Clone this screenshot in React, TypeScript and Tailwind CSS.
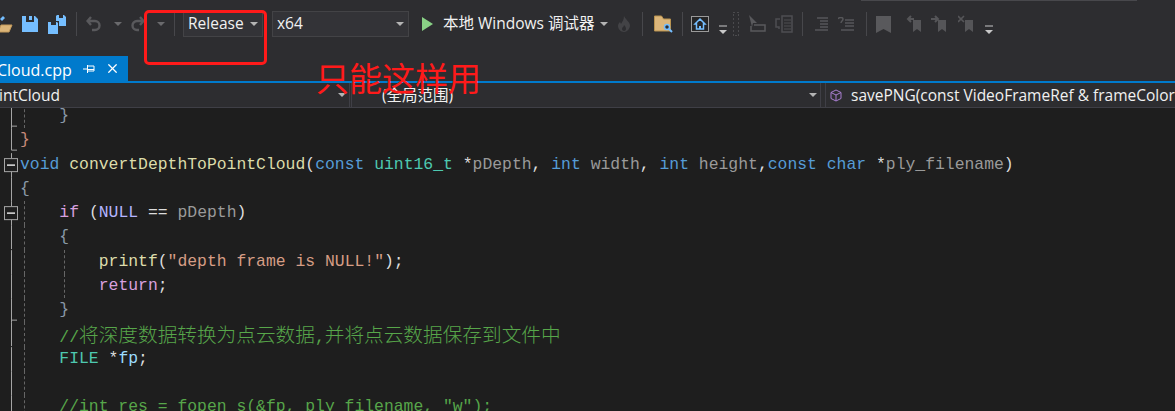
import React from "react";
import { X } from "lucide-react";

const UI = "font-['Open_Sans','Noto_Sans_CJK_SC',sans-serif]";

const Caret = ({ className = "" }: { className?: string }) => (
  <svg width="8" height="4" viewBox="0 0 8 4" className={`shrink-0 ${className}`}>
    <path d="M0 0h8L4 4z" fill="currentColor" />
  </svg>
);

const Sep = ({ className = "" }: { className?: string }) => (
  <div className={`w-px h-[24px] bg-[#47474b] shrink-0 ${className}`} />
);

const Overflow = ({ className = "" }: { className?: string }) => (
  <svg width="10" height="10" viewBox="0 0 10 10" className={`shrink-0 ${className}`}>
    <path d="M1 1h8" stroke="#c8c8c8" strokeWidth="1" />
    <path d="M1 5h8L5 9z" fill="#c8c8c8" />
  </svg>
);

const Bookmark = ({ kind, className = "" }: { kind: "back" | "next" | "clear"; className?: string }) => (
  <svg width="15" height="18" viewBox="0 0 15 18" className={`shrink-0 ${className}`}>
    <path d="M7 5h8v12l-4-3-4 3z" fill="#555558" />
    {kind === "back" && <path d="M8 4H2M5 1 2 4l3 3" stroke="#555558" strokeWidth="2" fill="none" />}
    {kind === "next" && <path d="M0 4h7M4 1l3 3-3 3" stroke="#555558" strokeWidth="2" fill="none" />}
    {kind === "clear" && <path d="M0 1l6 6M6 1 0 7" stroke="#555558" strokeWidth="1.600" fill="none" />}
  </svg>
);

const Toolbar = () => (
  <div className={`flex items-center h-[26px] mt-[10px] mb-[19px] ${UI} text-[15.500px] text-[#f1f1f1]`}>
    {/* open */}
    <svg width="17" height="18" viewBox="0 0 17 18" className="shrink-0 -ml-[4px]">
      <path d="M1 8v9h12l3-7H5l-2 5" fill="#dcb67a" stroke="#c49a5a" />
      <path d="M4 4l3-3 2 2-3 3z" fill="#75beff" />
    </svg>
    {/* save */}
    <svg width="16" height="16" viewBox="0 0 16 16" className="shrink-0 ml-[9px]">
      <path d="M0 0h4v6h8V0h1l3 3v13H0z" fill="#75beff" />
      <path d="M7 0h3v4H7z" fill="#75beff" />
    </svg>
    {/* save all */}
    <svg width="18" height="19" viewBox="0 0 18 19" className="shrink-0 ml-[10px]">
      <path d="M0 7h3v3h5V7h1l1 1v11H0z" fill="#75beff" />
      <path d="M9 0h2v3h4V0h1l2 2v9h-7V6H8V1z" fill="#75beff" />
    </svg>
    <Sep className="ml-[10px]" />
    {/* undo */}
    <svg width="15" height="16" viewBox="0 0 15 16" className="shrink-0 ml-[9px]">
      <path d="M5 1 1.500 5 5 9M2 5h7a4.500 4.500 0 0 1 0 9H6" stroke="#59595c" strokeWidth="2.400" fill="none" />
    </svg>
    <Caret className="ml-[13px] text-[#6a6a6d]" />
    {/* redo */}
    <svg width="14" height="16" viewBox="0 0 14 16" className="shrink-0 ml-[9px]">
      <path d="M9 1l3.500 4L9 9M12 5H6a4.500 4.500 0 0 0 0 9h2" stroke="#59595c" strokeWidth="2.400" fill="none" />
    </svg>
    <Caret className="ml-[12px] text-[#6a6a6d]" />
    <Sep className="ml-[9px]" />
    {/* config combo */}
    <div className="flex items-center justify-between w-[80px] h-[26px] ml-[8px] pl-[4px] pr-[4px] bg-[#333337] border border-[#434346]">
      <span className="pb-[1px]">Release</span>
      <Caret className="text-[#b4b4b4]" />
    </div>
    <div className="flex items-center justify-between w-[137px] h-[26px] ml-[9px] pl-[4px] pr-[4px] bg-[#333337] border border-[#434346]">
      <span className="pb-[1px]">x64</span>
      <Caret className="text-[#b4b4b4]" />
    </div>
    {/* start */}
    <svg width="11" height="14" viewBox="0 0 11 14" className="shrink-0 ml-[13px]">
      <path d="M0 0l11 7-11 7z" fill="#89d185" />
    </svg>
    <span className="ml-[10px] pb-[1px] whitespace-nowrap">本地 Windows 调试器</span>
    <Caret className="ml-[5px] text-[#b4b4b4]" />
    {/* hot reload, disabled */}
    <svg width="12" height="16" viewBox="0 0 12 16" className="shrink-0 ml-[10px]">
      <path d="M6 0c1 3 5 5 6 9 0 4-3 7-6 7s-6-3-6-6c0-2 1-3 2-4l1 2c1-2 3-4 3-8z" fill="#434346" />
      <path d="M6 9c1 1 2 2 2 4 0 1-1 2-2 2s-2-1-2-2c0-2 2-2 2-4z" fill="#2d2d30" />
    </svg>
    <Sep className="ml-[12px]" />
    {/* find in files */}
    <svg width="19" height="18" viewBox="0 0 19 18" className="shrink-0 ml-[11px]">
      <path d="M.5 1h7l2 3h7v12H.5z" fill="#dcb67a" stroke="#b8924f" />
      <circle cx="13" cy="12" r="2.500" fill="#2d2d30" stroke="#75beff" strokeWidth="1.500" />
      <path d="M15 14l3 3" stroke="#75beff" strokeWidth="2" />
    </svg>
    <Sep className="ml-[9px]" />
    {/* home */}
    <svg width="18" height="16" viewBox="0 0 18 16" className="shrink-0 ml-[8px]">
      <rect x="0.500" y="0.500" width="17" height="15" fill="#252526" stroke="#9a9a9a" />
      <path d="M9 3l5 5h-1.500v5h-7V8H4z" fill="none" stroke="#75beff" strokeWidth="1.500" />
      <path d="M8 10h2v3H8z" fill="#75beff" />
    </svg>
    <Overflow className="ml-[9px] mt-[11px]" />
    <svg width="6" height="24" viewBox="0 0 6 24" className="shrink-0 ml-[5px]">
      <path d="M0 0h6v24H0z" fill="none" stroke="#4a4a4d" strokeWidth="2" strokeDasharray="2 2" />
    </svg>
    {/* insert comment style pair, disabled */}
    <svg width="17" height="18" viewBox="0 0 17 18" className="shrink-0 ml-[10px]">
      <path d="M0 0l8 8H4l-1 4z" fill="#59595c" />
      <path d="M5 10h11v6H2v-5" fill="none" stroke="#59595c" strokeWidth="1.500" />
    </svg>
    <svg width="18" height="18" viewBox="0 0 18 18" className="shrink-0 ml-[9px]">
      <path d="M5 4H1v8h3v2" fill="none" stroke="#4e4e51" strokeWidth="1.500" />
      <path d="M7 1h10v16H7z" fill="none" stroke="#4e4e51" strokeWidth="1.500" />
      <path d="M9 5h7M9 8h7M9 11h7M9 14h7" stroke="#4e4e51" />
    </svg>
    <Sep className="ml-[9px]" />
    {/* comment / uncomment */}
    <svg width="14" height="14" viewBox="0 0 14 14" className="shrink-0 ml-[11px]">
      <path d="M3 1h11M6 4h8M6 7h8M6 10h8M1 13h13" stroke="#565659" strokeWidth="1.300" />
    </svg>
    <svg width="16" height="14" viewBox="0 0 16 14" className="shrink-0 ml-[10px]">
      <path d="M0 2c1-2 5-2 5 0 0 2-2 2-2 4" fill="none" stroke="#565659" strokeWidth="1.500" />
      <path d="M7 3h9M7 6h9M7 9h9M3 13h13" stroke="#565659" strokeWidth="1.300" />
    </svg>
    <Sep className="ml-[12px]" />
    <svg width="15" height="17" viewBox="0 0 15 17" className="shrink-0 ml-[9px]">
      <path d="M0 0h15v17l-7.500-4L0 17z" fill="#59595c" />
    </svg>
    <Bookmark kind="back" className="ml-[15px]" />
    <Bookmark kind="next" className="ml-[10px]" />
    <Bookmark kind="clear" className="ml-[12px]" />
    <Overflow className="ml-[11px] mt-[11px]" />
  </div>
);

const NavCombo = ({ className, children }: { className: string; children: React.ReactNode }) => (
  <div className={`flex items-center justify-between h-[24px] pr-[3px] border-r border-[#3f3f46] shrink-0 ${className}`}>
    {children}
    <Caret className="text-[#b4b4b4]" />
  </div>
);

type Fold = "none" | "line" | "end" | "minus" | "inner";

const Gutter = ({ fold }: { fold: Fold }) => (
  <svg width="20" height="24.250" viewBox="0 0 20 24" className="shrink-0">
    {fold === "line" && <path d="M11.500 0v24" stroke="#a5a5a5" />}
    {fold === "end" && <path d="M11.500 0v22H17" stroke="#a5a5a5" fill="none" />}
    {fold === "inner" && <path d="M11.500 0v24M11.500 22H17" stroke="#a5a5a5" fill="none" />}
    {fold === "minus" && (
      <>
        <path d="M11.500 0v5M11.500 18v6" stroke="#a5a5a5" />
        <rect x="4.500" y="5.500" width="13" height="13" fill="#1e1e1e" stroke="#a5a5a5" />
        <path d="M7 12h8" stroke="#e0e0e0" strokeWidth="1.500" />
      </>
    )}
  </svg>
);

const Guide = ({ x }: { x: number }) => (
  <span className="absolute top-0 bottom-0 w-px border-l border-dashed border-[#666666]" style={{ left: x }} />
);

const Line = ({ fold = "line", guides = [], children }: { fold?: Fold; guides?: number[]; children?: React.ReactNode }) => (
  <div className="relative flex h-[24.250px] leading-[24.250px] whitespace-pre">
    {guides.map((g) => (
      <Guide key={g} x={g} />
    ))}
    <Gutter fold={fold} />
    <span>{children}</span>
  </div>
);

const Kw = ({ children }: { children: React.ReactNode }) => <span className="text-[#569cd6]">{children}</span>;
const Ty = ({ children }: { children: React.ReactNode }) => <span className="text-[#4ec9b0]">{children}</span>;
const Fn = ({ children }: { children: React.ReactNode }) => <span className="text-[#dcdcaa]">{children}</span>;
const Pa = ({ children }: { children: React.ReactNode }) => <span className="text-[#9a9a9a]">{children}</span>;
const Ctl = ({ children }: { children: React.ReactNode }) => <span className="text-[#d8a0df]">{children}</span>;
const Br = ({ children }: { children: React.ReactNode }) => <span className="text-[#8a9aa8]">{children}</span>;
const Cm = ({ children }: { children: React.ReactNode }) => <span className="text-[#57a64a]">{children}</span>;
const Zh = ({ children }: { children: React.ReactNode }) => (
  <span className="text-[19.670px] font-['Noto_Sans_CJK_SC',sans-serif] font-light">{children}</span>
);

const Editor = () => (
  <div className="flex-1 bg-[#1e1e1e] overflow-hidden font-['Liberation_Mono',monospace] text-[16.400px] text-[#dcdcdc] pt-[2px]">
    <div className="-mt-[6px]">
      <Line fold="inner" guides={[24]}><Br>{"    }"}</Br></Line>
      <Line fold="end"><span className="text-[#c98a7a]">{"}"}</span></Line>
      <Line fold="minus"><Kw>void</Kw> <Fn>convertDepthToPointCloud</Fn>(<Kw>const</Kw> <Ty>uint16_t</Ty> *<Pa>pDepth</Pa>, <Kw>int</Kw> <Pa>width</Pa>, <Kw>int</Kw> <Pa>height</Pa>,<Kw>const</Kw> <Kw>char</Kw> *<Pa>ply_filename</Pa>)</Line>
      <Line><Br>{"{"}</Br></Line>
      <Line fold="minus" guides={[24]}>{"    "}<Ctl>if</Ctl> (<span className="text-[#b4b4ff]">NULL</span> == <Pa>pDepth</Pa>)</Line>
      <Line guides={[24]}><Br>{"    {"}</Br></Line>
      <Line guides={[24, 64]}>{"        "}<Fn>printf</Fn>(<span className="text-[#d69d85]">"depth frame is NULL!"</span>);</Line>
      <Line guides={[24, 64]}>{"        "}<Ctl>return</Ctl>;</Line>
      <Line fold="inner" guides={[24]}><Br>{"    }"}</Br></Line>
      <Line guides={[24]}><Cm>{"    //"}<Zh>将深度数据转换为点云数据</Zh>,<Zh>并将点云数据保存到文件中</Zh></Cm></Line>
      <Line guides={[24]}>{"    "}<Ty>FILE</Ty> *<span className="text-[#9cdcfe]">fp</span>;</Line>
      <Line guides={[24]} />
      <Line guides={[24]}><Cm>{'    //int res = fopen_s(&fp, ply_filename, "w");'}</Cm></Line>
    </div>
  </div>
);

export default function App() {
  return (
    <div className="relative w-[1175px] h-[411px] overflow-hidden bg-[#2d2d30] flex flex-col">
      <div className="h-px w-[276px] ml-[861px] bg-[#48484c] shrink-0" />
      <Toolbar />

      {/* document tab */}
      <div className={`flex items-center w-[128px] h-[25px] bg-[#007acc] text-white text-[16px] shrink-0 ${UI}`}>
        <span className="-ml-[3px] pt-[2px]">Cloud.cpp</span>
        <svg width="12" height="8" viewBox="0 0 12 8" className="shrink-0 ml-[11px]">
          <path d="M0 4h4M4.500 0v8M4.500 1h6.500v5H4.500M4.500 4.500h6.500" stroke="#ffffff" fill="none" />
        </svg>
        <X size={15} strokeWidth={2} className="ml-[10px]" />
      </div>
      <div className="h-[2px] bg-[#007acc] shrink-0" />

      {/* navigation bar */}
      <div className={`flex items-center h-[25px] border-b border-[#3f3f46] text-[15.500px] text-[#f1f1f1] shrink-0 ${UI}`}>
        <NavCombo className="w-[350px]">
          <span className="-ml-[1px] pt-[2px]">intCloud</span>
        </NavCombo>
        <NavCombo className="w-[470px] ml-[1px] border-l border-l-[#3f3f46] pl-[30px]">
          <span className="pt-[2px]">(全局范围)</span>
        </NavCombo>
        <div className="flex items-center flex-1 h-[24px] ml-[4px] border-l border-[#3f3f46] pl-[4px] whitespace-nowrap overflow-hidden">
          <svg width="12" height="13" viewBox="0 0 12 13" className="shrink-0">
            <path d="M6 1l5 2.500v6L6 12 1 9.500v-6zM1 3.500 6 6l5-2.500M6 6v6" fill="none" stroke="#a97fd0" />
          </svg>
          <span className="ml-[9px] pt-[2px]">savePNG(const VideoFrameRef &amp; frameColor</span>
        </div>
      </div>

      <Editor />

      {/* red annotation over the screenshot */}
      <div className="absolute left-[144px] top-[10px] w-[123px] h-[55px] border-[3px] border-[#ff1a1a] rounded-[5px]" />
      <div className="absolute left-[316px] top-[54px] text-[33px] leading-[46px] text-[#ff1a1a] font-['Noto_Sans_CJK_SC',sans-serif] font-normal whitespace-nowrap">
        只能这样用
      </div>
    </div>
  );
}
